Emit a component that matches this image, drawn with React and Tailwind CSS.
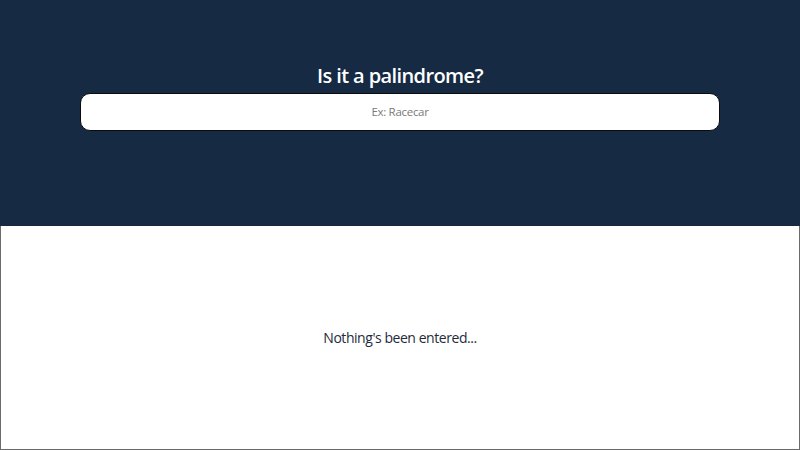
import { useState } from "react";

function App() {
  const [text, setText] = useState("");

  const clean = text.toLowerCase().replace(/[^a-z0-9]/g, "");
  const isPal = clean.length > 0 && clean === clean.split("").reverse().join("");

  let message = "Nothing's been entered...";
  if (text.length > 0) {
    message = isPal ? `Yes! "${text}" is a palindrome.` : `Nope, "${text}" is not a palindrome.`;
  }

  return (
    <div className="flex h-[450px] w-[800px] flex-col font-['Open_Sans',sans-serif]">
      <header className="flex h-[226px] flex-col items-center bg-[#162a44] px-20 pt-[62px]">
        <h1 className="text-[20px] font-semibold leading-[28px] tracking-[-0.6px] text-white">
          Is it a palindrome?
        </h1>
        <input
          className="mt-[3px] h-[38px] w-full rounded-[10px] border border-[#0b0b0b] bg-white pb-[2px] text-center text-[11.5px] tracking-[-0.3px] text-[#333] outline-none placeholder:text-[#7a7a7a]"
          placeholder="Ex: Racecar"
          value={text}
          onChange={(e) => setText(e.target.value)}
        />
      </header>
      <main className="flex flex-1 items-center justify-center border-x border-b border-[#6b6b6b] bg-white">
        <p className="text-[14px] tracking-[-0.45px] text-[#1e2b3d]">{message}</p>
      </main>
    </div>
  );
}

export default App;
